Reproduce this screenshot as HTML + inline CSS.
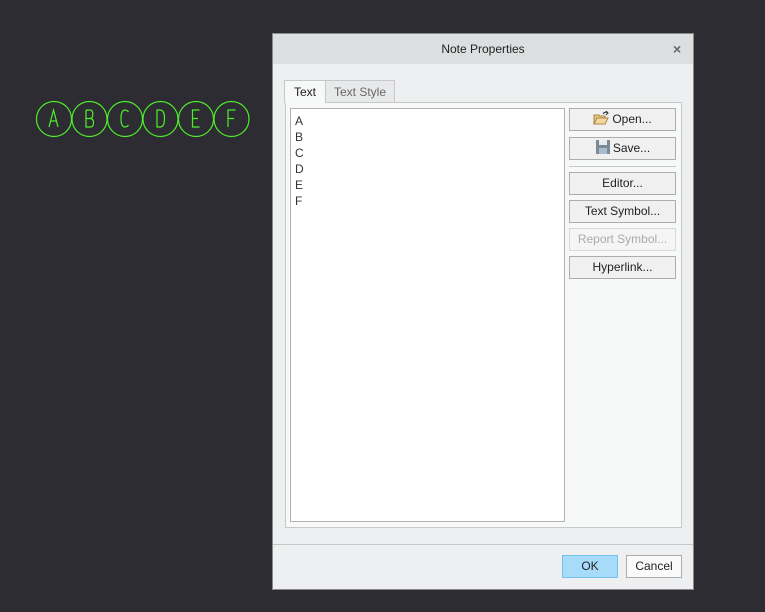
<!DOCTYPE html>
<html><head><style>
*{box-sizing:border-box;margin:0;padding:0}
body{width:765px;height:612px;background:#2d2c33;position:relative;overflow:hidden;font-family:"Liberation Sans",sans-serif;font-size:12px;color:#222}
.a{position:absolute}
.btn{position:absolute;left:569px;width:107px;height:23px;border:1px solid #adadad;background:#f0f0f0;text-align:center;line-height:21px;font-size:12px;color:#222}
</style></head><body>
<svg class="a" style="left:0;top:0" width="270" height="160">
<g fill="none" stroke="#4ef02a" stroke-width="1.2">
<circle cx="54" cy="119" r="17.5"/><circle cx="89.5" cy="119" r="17.5"/><circle cx="125" cy="119" r="17.5"/><circle cx="160.5" cy="119" r="17.5"/><circle cx="196" cy="119" r="17.5"/><circle cx="231.5" cy="119" r="17.5"/>
<path d="M49 127L53.5 110L58 127M50.5 121H56.5"/>
<path d="M86 110V127H90.5Q93.5 127 93.5 122.5Q93.5 118.5 90 118.5H86M86 110H90Q92.8 110 92.8 114Q92.8 118.5 90 118.5"/>
<path d="M128.5 112Q127 110 125 110Q121 110 121 118.5Q121 127 125 127Q127 127 128.5 125"/>
<path d="M157 110V127H160Q164.5 127 164.5 118.5Q164.5 110 160 110Z"/>
<path d="M199.5 110H192.5V127H199.5M192.5 118.5H198"/>
<path d="M235.5 110H228V127M228 118.5H234"/>
</g></svg>
<div class="a" style="left:272px;top:33px;width:422px;height:557px;background:#eeeff1;border:1px solid #8a8a8a">
 <div class="a" style="left:0;top:0;width:420px;height:30px;background:#dcdfe0;text-align:center;line-height:30px;font-size:12px">Note Properties</div>
 <div class="a" style="left:400px;top:7px;font-size:14px;font-weight:bold;color:#666">×</div>
</div>
<div class="a" style="left:285px;top:102px;width:397px;height:426px;background:#f7f8f8;border:1px solid #c8c8c8"></div>
<div class="a" style="left:284px;top:80px;width:42px;height:23px;background:#f7f8f8;border:1px solid #c8c8c8;border-bottom:none;text-align:center;line-height:22px">Text</div>
<div class="a" style="left:325px;top:80px;width:70px;height:22px;background:#e8e9ea;border:1px solid #c8c8c8;border-bottom:none;text-align:center;line-height:22px;color:#666">Text Style</div>
<div class="a" style="left:290px;top:108px;width:275px;height:414px;background:#fff;border:1px solid #b0b0b0;padding:4px 0 0 4px;line-height:16px;font-size:12px;color:#333">A<br>B<br>C<br>D<br>E<br>F</div>
<div class="btn" style="top:108px"><svg width="16" height="14" style="vertical-align:-2px;margin-right:3px"><path d="M1 4H6L7 5H12V13H1Z" fill="#e8c77a" stroke="#a9864a"/><path d="M1 13L4 7H15L12 13Z" fill="#f3d99a" stroke="#a9864a"/><path d="M10 3Q12 0 15 2M13 0L15 2L13 4" fill="none" stroke="#333"/></svg>Open...</div>
<div class="btn" style="top:137px"><svg width="16" height="16" style="vertical-align:-3px;margin-right:2px"><rect x="1" y="1" width="14" height="14" fill="#7b8a96"/><rect x="4" y="1" width="8" height="5" fill="#e8ecef"/><rect x="4" y="9" width="8" height="6" fill="#aabccc"/></svg>Save...</div>
<div class="a" style="left:569px;top:166px;width:107px;height:1px;background:#c8c8c8"></div>
<div class="btn" style="top:172px">Editor...</div>
<div class="btn" style="top:200px">Text Symbol...</div>
<div class="btn" style="top:228px;color:#aaa;border-color:#d8d8d8;background:#f5f5f5">Report Symbol...</div>
<div class="btn" style="top:256px">Hyperlink...</div>
<div class="a" style="left:273px;top:544px;width:420px;height:1px;background:#c6c6c6"></div>
<div class="a" style="left:562px;top:555px;width:56px;height:23px;background:#a6dcfa;border:1px solid #72c1ef;text-align:center;line-height:21px">OK</div>
<div class="a" style="left:626px;top:555px;width:56px;height:23px;background:#fafafa;border:1px solid #adadad;text-align:center;line-height:21px">Cancel</div>
</body></html>
